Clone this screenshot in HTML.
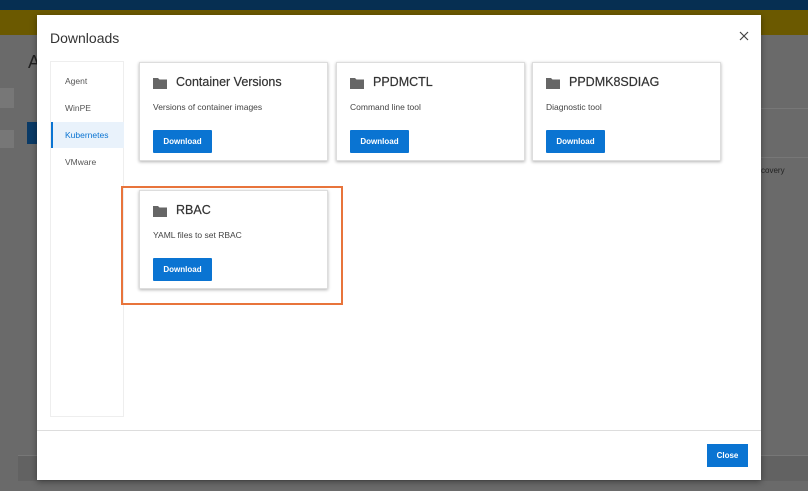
<!DOCTYPE html>
<html><head><style>
*{box-sizing:border-box;margin:0;padding:0}
body{width:808px;height:491px;overflow:hidden;background:#6a6a6a;font-family:"Liberation Sans",sans-serif;position:relative}
.abs{position:absolute}
.card{position:absolute;width:189px;height:99px;background:#fff;border:1px solid #ddd;box-shadow:0 1px 3px rgba(0,0,0,.3)}
.card .ic{position:absolute;left:13px;top:15px;width:14px;height:11px}
.card h3{position:absolute;left:36px;top:12px;font-size:12.5px;font-weight:normal;color:#333;-webkit-text-stroke:0.2px #333}
.card p{position:absolute;left:13px;top:39px;font-size:8.5px;color:#444}
.btn{position:absolute;left:13px;top:67px;width:59px;height:23px;background:#0a74d2;color:#fff;font-size:8px;font-weight:bold;text-align:center;line-height:23px;border-radius:1px}
.nav{position:absolute;left:14px;font-size:8.5px;color:#555}
</style></head><body>
<div class="abs" style="left:0;top:0;width:808px;height:10px;background:#062f52"></div>
<div class="abs" style="left:0;top:10px;width:808px;height:25px;background:#6b5900"></div>
<div class="abs" style="left:28px;top:52px;font-size:18px;color:#222">A</div>
<div class="abs" style="left:0;top:88px;width:14px;height:20px;background:#777"></div>
<div class="abs" style="left:0;top:130px;width:14px;height:18px;background:#777"></div>
<div class="abs" style="left:27px;top:122px;width:12px;height:22px;background:#0a3a66"></div>
<div class="abs" style="left:761px;top:108px;width:47px;height:50px;border-top:1px solid #777;border-bottom:1px solid #777"></div>
<div class="abs" style="left:761px;top:166px;font-size:8px;color:#222">covery</div>
<div class="abs" style="left:18px;top:455px;width:790px;height:26px;background:#626262;border-top:1px solid #777"></div>

<div class="abs" style="left:37px;top:15px;width:724px;height:465px;background:#fff;box-shadow:0 2px 6px rgba(0,0,0,.4)">
  <div class="abs" style="left:13px;top:15px;font-size:14px;color:#333">Downloads</div>
  <svg class="abs" style="left:702px;top:16px" width="10" height="10" viewBox="0 0 10 10"><path d="M1 1L9 9M9 1L1 9" stroke="#444" stroke-width="1.2"/></svg>
  <div class="abs" style="left:13px;top:46px;width:74px;height:356px;border:1px solid #eee">
    <div class="nav" style="top:14px">Agent</div>
    <div class="nav" style="top:41px">WinPE</div>
    <div class="abs" style="left:0;top:60px;width:73px;height:26px;background:#e9f2fb;border-left:2px solid #0a74d2"></div>
    <div class="nav" style="top:68px;color:#0a74d2">Kubernetes</div>
    <div class="nav" style="top:95px">VMware</div>
  </div>
  <div class="abs" style="left:0;top:415px;width:724px;height:1px;background:#ddd"></div>
  <div class="abs" style="left:670px;top:429px;width:41px;height:23px;background:#0a74d2;color:#fff;font-size:8px;font-weight:bold;text-align:center;line-height:23px">Close</div>
</div>

<div class="card" style="left:139px;top:62px"><svg class="ic" viewBox="0 0 14 11"><path d="M0 0H5L6.5 1.5H14V11H0Z" fill="#666"/></svg><h3>Container Versions</h3><p>Versions of container images</p><div class="btn">Download</div></div>
<div class="card" style="left:336px;top:62px"><svg class="ic" viewBox="0 0 14 11"><path d="M0 0H5L6.5 1.5H14V11H0Z" fill="#666"/></svg><h3>PPDMCTL</h3><p>Command line tool</p><div class="btn">Download</div></div>
<div class="card" style="left:532px;top:62px"><svg class="ic" viewBox="0 0 14 11"><path d="M0 0H5L6.5 1.5H14V11H0Z" fill="#666"/></svg><h3>PPDMK8SDIAG</h3><p>Diagnostic tool</p><div class="btn">Download</div></div>
<div class="card" style="left:139px;top:190px"><svg class="ic" viewBox="0 0 14 11"><path d="M0 0H5L6.5 1.5H14V11H0Z" fill="#666"/></svg><h3>RBAC</h3><p>YAML files to set RBAC</p><div class="btn">Download</div></div>
<div class="abs" style="left:121px;top:186px;width:222px;height:119px;border:2px solid #e8743b"></div>
</body></html>
